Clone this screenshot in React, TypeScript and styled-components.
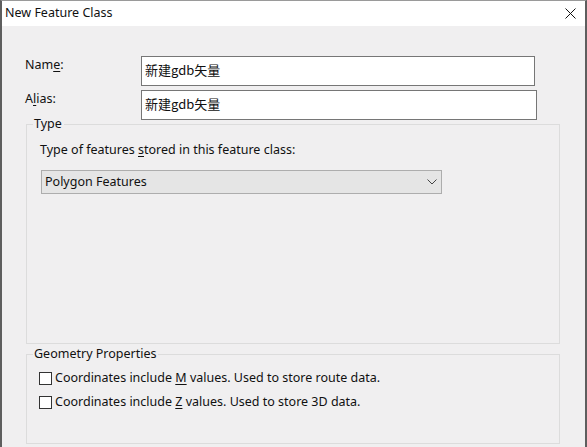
import React from "react";
import styled, { createGlobalStyle } from "styled-components";

const Global = createGlobalStyle`
  html, body { margin: 0; padding: 0; background: #f0eff0; }
  #root { width: 587px; height: 447px; }
`;

const Window = styled.div`
  width: 587px;
  height: 447px;
  box-sizing: border-box;
  border-left: 2px solid #5e5e5e;
  border-right: 2px solid #5e5e5e;
  border-top: 1px solid #9a9a9a;
  background: #f0eff0;
  display: flex;
  flex-direction: column;
  overflow: hidden;
  font-family: "Noto Sans", "Noto Sans CJK SC", sans-serif;
  font-size: 12.5px;
  color: #111;
`;

const TitleBar = styled.div`
  height: 25px;
  flex: none;
  background: #fff;
  display: flex;
  align-items: center;
  justify-content: space-between;
  padding: 0 9px 1px 3px;
  box-sizing: border-box;
`;

const Title = styled.span`
  font-size: 12.5px;
  line-height: 16px;
  color: #111;
`;

const Body = styled.div`
  flex: 1;
  padding: 30px 25px 0 24px;
  display: flex;
  flex-direction: column;
`;

const Fields = styled.div`
  display: grid;
  grid-template-columns: 115px auto;
  row-gap: 4px;
  justify-items: start;
`;

const FieldLabel = styled.label`
  line-height: 18px;
  margin-left: -1px;
`;

const TextBox = styled.div<{ $w: number }>`
  width: ${(p) => p.$w}px;
  height: 30px;
  box-sizing: border-box;
  border: 1px solid #767676;
  background: #fff;
  display: flex;
  align-items: center;
  padding: 0 0 3px 3px;
  font-family: "Noto Sans CJK SC", "Noto Sans", sans-serif;
  font-size: 13px;
`;

const Group = styled.fieldset<{ $h: number; $mt: number }>`
  margin: ${(p) => p.$mt}px 0 0 0;
  padding: 0;
  min-width: 0;
  height: ${(p) => p.$h}px;
  box-sizing: border-box;
  border: 1px solid #dcdcdc;
  display: flex;
  flex-direction: column;
`;

const Legend = styled.legend`
  margin-left: 6px;
  padding: 0 2px 0 1px;
  line-height: 16px;
  font-size: 12.5px;
`;

const Hint = styled.div`
  margin: 9px 0 0 13px;
  line-height: 18px;
`;

const Combo = styled.div`
  margin: 11px 0 0 14px;
  width: 401px;
  height: 24px;
  box-sizing: border-box;
  border: 1px solid #adadad;
  background: #e5e5e5;
  display: flex;
  align-items: center;
  justify-content: space-between;
  padding: 0 4px 1px 3px;
`;

const CheckRow = styled.div<{ $mt: number }>`
  margin: ${(p) => p.$mt}px 0 0 12px;
  display: flex;
  align-items: center;
  gap: 3px;
  line-height: 18px;
`;

const Box = styled.span`
  width: 13px;
  height: 13px;
  box-sizing: border-box;
  border: 1px solid #333;
  background: #fff;
  flex: none;
  margin-top: 1px;
`;

const U = styled.u`
  text-decoration-thickness: 1px;
  text-underline-offset: 2px;
`;

const Spacer = styled.div<{ $h: number }>`
  height: ${(p) => p.$h}px;
  flex: none;
`;

export default function App() {
  return (
    <>
      <Global />
      <Window>
        <TitleBar>
          <Title>New Feature Class</Title>
          <svg width="11" height="11" viewBox="0 0 11 11">
            <path d="M0.5 0.5 L10.5 10.5 M10.5 0.5 L0.5 10.5" stroke="#111" strokeWidth="1" fill="none" />
          </svg>
        </TitleBar>
        <Body>
          <Fields>
            <FieldLabel>
              Nam<U>e</U>:
            </FieldLabel>
            <TextBox $w={394}>新建gdb矢量</TextBox>
            <FieldLabel>
              A<U>l</U>ias:
            </FieldLabel>
            <TextBox $w={396}>新建gdb矢量</TextBox>
          </Fields>
          <Group $h={228} $mt={-4}>
            <Legend>Type</Legend>
            <Hint>
              Type of features <U>s</U>tored in this feature class:
            </Hint>
            <Combo>
              <span>Polygon Features</span>
              <svg width="10" height="6" viewBox="0 0 10 6">
                <path d="M0.5 0.5 L5 5 L9.5 0.5" stroke="#444" strokeWidth="1" fill="none" />
              </svg>
            </Combo>
          </Group>
          <Spacer $h={2} />
          <Group $h={98} $mt={0}>
            <Legend>Geometry Properties</Legend>
            <CheckRow $mt={7}>
              <Box />
              <span>
                Coordinates include <U>M</U> values. Used to store route data.
              </span>
            </CheckRow>
            <CheckRow $mt={6}>
              <Box />
              <span>
                Coordinates include <U>Z</U> values. Used to store 3D data.
              </span>
            </CheckRow>
          </Group>
        </Body>
      </Window>
    </>
  );
}
